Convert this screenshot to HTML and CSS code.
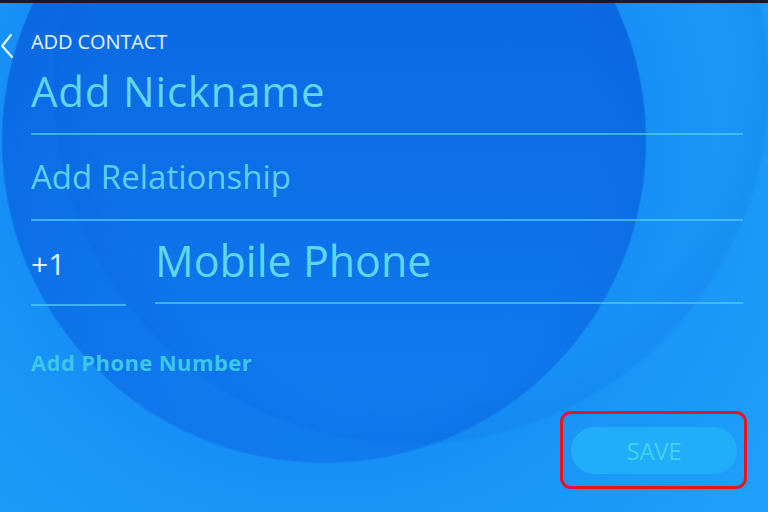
FILE: index.html
```html
<!DOCTYPE html>
<html lang="en">
<head>
<meta charset="utf-8">
<title>Add Contact</title>
<link rel="stylesheet" href="styles.css">
</head>
<body>
<div class="screen">
  <div class="topbar"></div>
  <header class="header">
    <svg class="back" width="14" height="26" viewBox="0 0 14 26" aria-hidden="true">
      <path d="M11 2 L2.2 13 L12 24" fill="none" stroke="#e2f3ff" stroke-width="2.2" stroke-linecap="round" stroke-linejoin="round"/>
    </svg>
    <span class="title">ADD CONTACT</span>
  </header>
  <main class="form">
    <div class="field nick">Add Nickname</div>
    <div class="field rel">Add Relationship</div>
    <div class="phone-row">
      <div class="field code">+1</div>
      <div class="field type">Mobile Phone</div>
    </div>
    <div class="add-phone">Add Phone Number</div>
  </main>
  <footer class="footer">
    <div class="highlight">
      <button class="save" type="button">SAVE</button>
    </div>
  </footer>
</div>
</body>
</html>
```

FILE: styles.css
```css
html, body {
  margin: 0;
  padding: 0;
  width: 768px;
  height: 512px;
  overflow: hidden;
}

body {
  font-family: "Open Sans", "Noto Sans", sans-serif;
  background-color: #1894f7;
  background-image:
    radial-gradient(circle at 411px 86px, transparent 310px, rgba(0, 80, 210, 0.12) 356px, transparent 360px),
    radial-gradient(circle at 324px 141px, transparent 321px, #1690f6 323px, #1a98f8 420px, #1ea0fa 560px),
    radial-gradient(circle at 324px 141px, transparent 270px, rgba(0, 60, 190, 0.06) 320px, transparent 323px),
    linear-gradient(180deg, #0b6ae4 0%, #0d72e9 45%, #107bee 80%, #1383f2 100%);
}

.screen {
  width: 768px;
  height: 512px;
  display: flex;
  flex-direction: column;
}

.topbar {
  height: 3px;
  background: #0c1a3e;
  flex: none;
}

.header {
  display: flex;
  align-items: flex-start;
  height: 24px;
  margin-top: 26.5px;
}

.back {
  display: block;
  margin-top: 3.5px;
  flex: none;
}

.title {
  margin-left: 17px;
  font-size: 20px;
  line-height: 24px;
  color: #e4f4ff;
  letter-spacing: -0.1px;
}

.form {
  padding: 0 25px 0 31px;
  display: flex;
  flex-direction: column;
}

.field {
  border-bottom: 2px solid rgba(78, 200, 248, 0.75);
  color: #60d6f2;
  white-space: nowrap;
}

.nick {
  margin-top: 12.2px;
  font-size: 42px;
  line-height: 50px;
  padding-bottom: 17px;
  letter-spacing: 0.8px;
}

.rel {
  font-size: 33px;
  line-height: 40px;
  padding-top: 22px;
  padding-bottom: 22px;
  letter-spacing: 0;
  color: #5ccff0;
}

.phone-row {
  display: flex;
  align-items: flex-start;
  gap: 29px;
}

.code {
  width: 95px;
  flex: none;
  font-size: 30px;
  line-height: 34px;
  padding-top: 26px;
  padding-bottom: 23px;
  color: #e0f3ff;
}

.type {
  flex: 1;
  font-size: 43px;
  line-height: 50px;
  padding-top: 15px;
  padding-bottom: 16px;
  color: #5fd6f2;
}

.add-phone {
  margin-top: 42.5px;
  font-size: 22px;
  line-height: 28px;
  font-weight: 700;
  color: #3cc6ea;
  letter-spacing: 0.4px;
}

.footer {
  display: flex;
  justify-content: flex-end;
  padding-right: 21px;
  margin-top: 34.8px;
}

.highlight {
  border: 3px solid #e8141e;
  border-radius: 11px;
  padding: 13px 7px 12px 8px;
  display: flex;
}

.save {
  width: 166px;
  height: 47px;
  border: none;
  border-radius: 24px;
  background: #22adf8;
  color: #40d2f0;
  font-family: "Open Sans", "Noto Sans", sans-serif;
  font-size: 24px;
  line-height: 47px;
  padding: 0;
  letter-spacing: -0.3px;
}
```
